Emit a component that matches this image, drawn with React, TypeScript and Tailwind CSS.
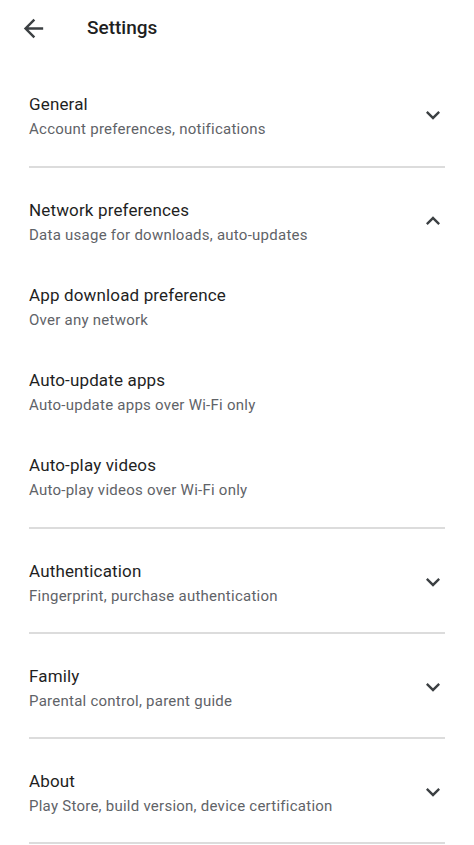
import React from "react";

interface Item {
  title: string;
  subtitle: string;
}

interface Section extends Item {
  expanded?: boolean;
  children?: Item[];
}

const sections: Section[] = [
  { title: "General", subtitle: "Account preferences, notifications" },
  {
    title: "Network preferences",
    subtitle: "Data usage for downloads, auto-updates",
    expanded: true,
    children: [
      { title: "App download preference", subtitle: "Over any network" },
      { title: "Auto-update apps", subtitle: "Auto-update apps over Wi-Fi only" },
      { title: "Auto-play videos", subtitle: "Auto-play videos over Wi-Fi only" },
    ],
  },
  { title: "Authentication", subtitle: "Fingerprint, purchase authentication" },
  { title: "Family", subtitle: "Parental control, parent guide" },
  { title: "About", subtitle: "Play Store, build version, device certification" },
];

function Chevron({ up }: { up?: boolean }) {
  return (
    <svg
      viewBox="0 0 24 24"
      className={"h-[28px] w-[28px] fill-[#3c4043] " + (up ? "rotate-180" : "")}
    >
      <path d="M16.59 8.59L12 13.17 7.41 8.59 6 10l6 6 6-6z" />
    </svg>
  );
}

function TextBlock({ title, subtitle }: Item) {
  return (
    <div className="flex flex-col">
      <span className="text-[17px] leading-[24px] tracking-[0.15px] text-[#1f1f1f]">{title}</span>
      <span className="text-[15px] leading-[26px] tracking-[0.25px] text-[#5f6368]">{subtitle}</span>
    </div>
  );
}

export default function App() {
  return (
    <div
      className="min-h-[845px] w-[474px] bg-white"
      style={{ fontFamily: "Roboto, 'Noto Sans', sans-serif" }}
    >
      {/* Top bar */}
      <div className="flex h-[56px] items-center pl-[19px]">
        <svg viewBox="0 0 24 24" className="h-[29px] w-[29px] fill-[#3c4043]">
          <path d="M20 11H7.83l5.59-5.59L12 4l-8 8 8 8 1.41-1.41L7.83 13H20v-2z" />
        </svg>
        <span className="ml-[39px] text-[19px] font-medium text-[#1f1f1f]">Settings</span>
      </div>

      <div className="px-[29px] pt-[6px]">
        {sections.map((s, i) => (
          <div key={s.title}>
            <div
              className={
                "flex items-center justify-between pt-[30px] " +
                (i < 2 ? "pb-[24px]" : "pb-[23px]")
              }
            >
              <TextBlock title={s.title} subtitle={s.subtitle} />
              <div className="mr-[-2px] mt-[-4px]">
                <Chevron up={s.expanded} />
              </div>
            </div>
            {s.children && (
              <div className="flex flex-col gap-[35px] pt-[11px] pb-[24px]">
                {s.children.map((c) => (
                  <TextBlock key={c.title} title={c.title} subtitle={c.subtitle} />
                ))}
              </div>
            )}
            <div className="h-[2px] bg-[#dcdcdc]" />
          </div>
        ))}
      </div>
    </div>
  );
}
